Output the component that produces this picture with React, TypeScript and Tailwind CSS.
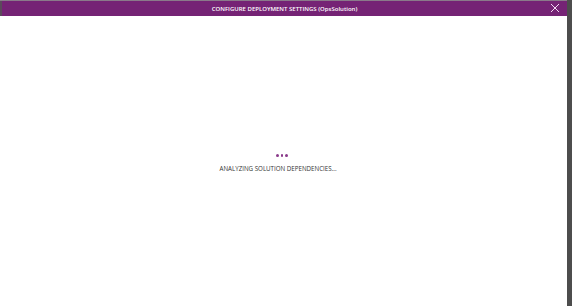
export default function App() {
  return (
    <div className="flex h-[306px] w-[572px] overflow-hidden bg-white" style={{ fontFamily: '"Open Sans", "Noto Sans", sans-serif' }}>
      <div className="flex flex-1 flex-col border-t border-[#8a7a8a]">
        {/* header */}
        <div className="relative flex h-[15px] items-center justify-center border-l-2 border-[#5b4a5b] bg-[#752375]">
          <span className="text-[6px] font-semibold leading-none text-white">
            CONFIGURE DEPLOYMENT SETTINGS (OpsSolution)
          </span>
          <svg className="absolute right-[7px] top-[2px] h-[10px] w-[10px]" viewBox="0 0 10 10" fill="none">
            <path d="M1 1 L9 9 M9 1 L1 9" stroke="#f4d9f4" strokeWidth="1" />
          </svg>
        </div>

        {/* body */}
        <div className="flex flex-1 flex-col items-center pr-[11px] pt-[138px]">
          <div className="flex gap-[2px] pl-[8px]">
            <span className="h-[2.5px] w-[2.5px] rounded-full bg-[#8a3a8a]" />
            <span className="h-[2.5px] w-[2.5px] rounded-full bg-[#8a3a8a]" />
            <span className="h-[2.5px] w-[2.5px] rounded-full bg-[#8a3a8a]" />
          </div>
          <div className="mt-[9px] text-[6.2px] leading-none text-[#333]">ANALYZING SOLUTION DEPENDENCIES...</div>
        </div>
      </div>
      <div className="w-[5px] bg-[#4d4d4d]" />
    </div>
  );
}
